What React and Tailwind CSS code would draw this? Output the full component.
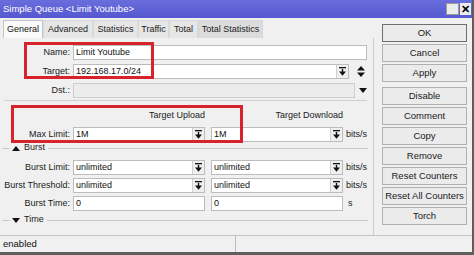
import React from "react";

const BUTTONS = [
  { label: "OK", primary: true },
  { label: "Cancel" },
  { label: "Apply", gapAfter: true },
  { label: "Disable" },
  { label: "Comment" },
  { label: "Copy" },
  { label: "Remove" },
  { label: "Reset Counters" },
  { label: "Reset All Counters" },
  { label: "Torch" },
];

const TABS = [
  { label: "General", w: "w-[40px]", active: true },
  { label: "Advanced", w: "w-[50px]" },
  { label: "Statistics", w: "w-[45px]" },
  { label: "Traffic", w: "w-[31px]" },
  { label: "Total", w: "w-[29px]" },
  { label: "Total Statistics", w: "w-[65px]", hover: true },
];

function PullDown() {
  return (
    <svg width="7" height="9" viewBox="0 0 7 9">
      <rect x="0" y="0" width="7" height="1.3" fill="#111" />
      <rect x="2.8" y="2" width="1.4" height="3" fill="#111" />
      <polygon points="0,4.5 7,4.5 3.5,8.8" fill="#111" />
    </svg>
  );
}

function Input({ value, className, drop, disabled }) {
  return (
    <div
      className={`h-[15px] flex items-stretch border ${
        disabled ? "bg-[#ececec] border-[#cdcdcd]" : "bg-white border-[#bcbcbc]"
      } ${className}`}
    >
      <span className="flex-1 pl-[2px] leading-[13px] text-[#111] truncate">{value}</span>
      {drop && (
        <span className="w-[12px] bg-[#efefef] border-l border-[#d0d0d0] flex items-center justify-center">
          <PullDown />
        </span>
      )}
    </div>
  );
}

function Label({ children }) {
  return <span className="w-[70px] text-right shrink-0 text-[#1a1a1a]">{children}</span>;
}

function Group({ label, open }) {
  return (
    <div className="flex items-center h-[12px]">
      <div className="w-[8px] h-px bg-[#c9c9c9] ml-[2px]" />
      <svg width="8" height="5" viewBox="0 0 8 5" className="ml-[2px]">
        {open ? (
          <polygon points="0,5 8,5 4,0" fill="#111" />
        ) : (
          <polygon points="0,0 8,0 4,5" fill="#111" />
        )}
      </svg>
      <span className="ml-[4px] text-[#222]">{label}</span>
      <div className="flex-1 h-px bg-[#c9c9c9] ml-[3px] mr-[5px]" />
    </div>
  );
}

export default function App() {
  return (
    <div className="w-[474px] h-[255px] bg-[#f0f0f0] flex flex-col border-r-2 border-b-[3px] border-[#5e5e5e] font-['Liberation_Sans',Arial,sans-serif] text-[9px] overflow-hidden">
      {/* Title bar */}
      <div className="h-[18px] shrink-0 bg-gradient-to-b from-[#6a6ddc] to-[#5558cf] flex items-center justify-between pl-[3px] pr-[1px]">
        <span className="text-white text-[9.5px]">Simple Queue &lt;Limit Youtube&gt;</span>
        <div className="flex items-center gap-[1px]">
          <span className="w-[13px] h-[12px] bg-[#ececec] border border-[#9a9a9a]" />
          <span className="w-[11px] h-[12px] bg-[#ececec] flex items-center justify-center text-[11px] font-bold leading-none text-black">
            ✕
          </span>
        </div>
      </div>

      <div className="flex flex-1 min-h-0">
        {/* Left: tabs + form */}
        <div className="w-[374px] flex flex-col">
          <div className="h-[18px] mt-[2px] flex pl-[3px]">
            {TABS.map((t) => (
              <div
                key={t.label}
                className={`${t.w} h-full flex items-center justify-center text-[9px] border border-b-0 ${
                  t.active
                    ? "bg-[#fafafa] border-[#c4c4c4] text-[#111]"
                    : t.hover
                    ? "bg-[#dcdcdc] border-[#d6d6d6] text-[#222]"
                    : "bg-[#e6e6e6] border-[#d9d9d9] text-[#222]"
                }`}
              >
                {t.label}
              </div>
            ))}
          </div>

          <div className="relative flex-1 flex flex-col border-r border-[#cbcbcb] pt-[7px]">
            <div className="flex items-center h-[15px]">
              <Label>Name:</Label>
              <Input value="Limit Youtube" className="ml-[3px] w-[294px]" />
            </div>
            <div className="flex items-center h-[15px] mt-[4px]">
              <Label>Target:</Label>
              <Input value="192.168.17.0/24" className="ml-[3px] w-[276px]" drop />
              <svg width="8" height="11" viewBox="0 0 8 11" className="ml-[8px]">
                <polygon points="0,4.5 8,4.5 4,0" fill="#111" />
                <polygon points="0,6.5 8,6.5 4,11" fill="#111" />
              </svg>
            </div>
            <div className="flex items-center h-[15px] mt-[4px]">
              <Label>Dst.:</Label>
              <Input value="" className="ml-[3px] w-[282px]" disabled />
              <svg width="8" height="5" viewBox="0 0 8 5" className="ml-[4px]">
                <polygon points="0,0 8,0 4,5" fill="#111" />
              </svg>
            </div>

            <div className="h-px bg-[#d0d0d0] mt-[2px] ml-[4px] mr-[6px]" />

            <div className="flex items-center h-[12px] mt-[9px] text-[#222]">
              <span className="w-[205px] text-right">Target Upload</span>
              <span className="w-[138px] text-right">Target Download</span>
            </div>
            <div className="flex items-center h-[15px] mt-[5px]">
              <Label>Max Limit:</Label>
              <Input value="1M" className="ml-[3px] w-[132px]" drop />
              <Input value="1M" className="ml-[6px] w-[132px]" drop />
              <span className="ml-[3px] text-[#222]">bits/s</span>
            </div>

            <Group label="Burst" open />
            <div className="flex items-center h-[15px] mt-[6px]">
              <Label>Burst Limit:</Label>
              <Input value="unlimited" className="ml-[3px] w-[132px]" drop />
              <Input value="unlimited" className="ml-[6px] w-[132px]" drop />
              <span className="ml-[3px] text-[#222]">bits/s</span>
            </div>
            <div className="flex items-center h-[15px] mt-[3px]">
              <Label>Burst Threshold:</Label>
              <Input value="unlimited" className="ml-[3px] w-[132px]" drop />
              <Input value="unlimited" className="ml-[6px] w-[132px]" drop />
              <span className="ml-[3px] text-[#222]">bits/s</span>
            </div>
            <div className="flex items-center h-[15px] mt-[3px]">
              <Label>Burst Time:</Label>
              <Input value="0" className="ml-[3px] w-[132px]" />
              <Input value="0" className="ml-[6px] w-[132px]" />
              <span className="ml-[5px] text-[#222]">s</span>
            </div>
            <div className="mt-[3px]">
              <Group label="Time" />
            </div>

            {/* annotation boxes */}
            <div className="absolute left-[24px] top-[4px] w-[130px] h-[37px] border-[3px] border-[#d8222c]" />
            <div className="absolute left-[11px] top-[67px] w-[232px] h-[38px] border-[3px] border-[#d8222c]" />
          </div>
        </div>

        {/* Right: buttons */}
        <div className="flex-1 flex flex-col pl-[8px] pt-[6px]">
          {BUTTONS.map((b) => (
            <div
              key={b.label}
              className={`w-[85px] h-[18px] shrink-0 flex items-center justify-center text-[9.5px] text-[#1a1a1a] bg-[#ebebeb] border ${
                b.primary ? "border-[#6f6f6f]" : "border-[#b0b0b0]"
              } ${b.gapAfter ? "mb-[5px]" : "mb-[2px]"} whitespace-nowrap`}
            >
              {b.label}
            </div>
          ))}
        </div>
      </div>

      {/* Status bar */}
      <div className="h-[17px] shrink-0 flex border-t border-[#c4c4c4] bg-[#f0f0f0]">
        <div className="w-[236px] border-r border-[#bdbdbd] pl-[3px] flex items-center text-[9.5px] text-[#111]">
          enabled
        </div>
        <div className="flex-1" />
      </div>
    </div>
  );
}
